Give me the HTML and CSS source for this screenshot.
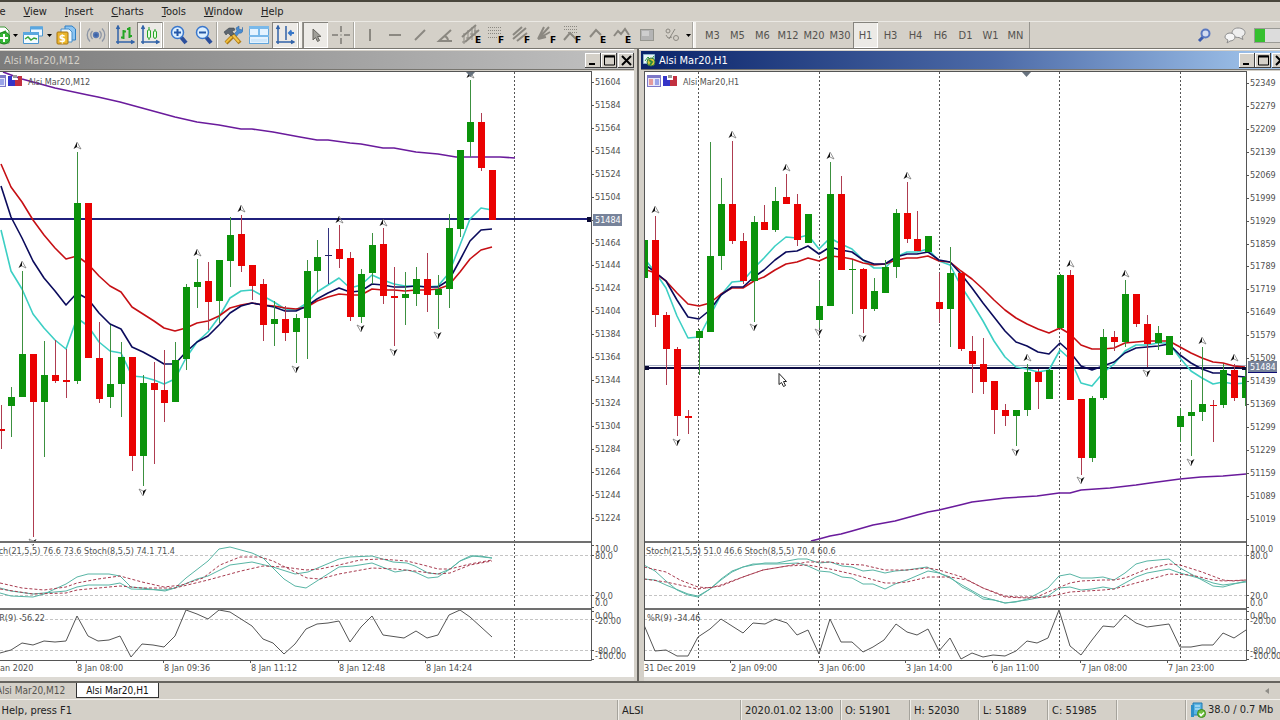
FILE: index.html
```html
<!DOCTYPE html>
<html lang="en">
	<head>
		<meta charset="UTF-8">
		<title>Alsi Mar20,H1</title>
		<meta name="viewport" content="width=device-width, initial-scale=1.0">
		<link rel="stylesheet" href="styles.css">
	</head>
	<body>
		<nav class="menu">
			<button>File</button>
			<button><u>V</u>iew</button>
			<button><u>I</u>nsert</button>
			<button><u>C</u>harts</button>
			<button><u>T</u>ools</button>
			<button><u>W</u>indow</button>
			<button><u>H</u>elp</button>
		</nav>

		<div class="toolbar">
			<button class="tool cut" aria-label="New chart">
				<svg width="10" height="20" viewBox="10 0 10 20"><path d="M0 2h15l4 4v12H0z" fill="#fff" stroke="#3f9a3a"/><path d="M0 10l6-4 5 3 5-3" fill="none" stroke="#2fae2f" stroke-width="2"/><circle cx="14" cy="13" r="6" fill="#35b435" stroke="#1c7f1c"/><path d="M14 9v8M10 13h8" stroke="#fff" stroke-width="2"/></svg>
			</button>
			<button class="drop wide" aria-label="New chart list"><svg width="5" height="3" viewBox="0 0 5 3"><path d="M0 0h5L2.500 3z"/></svg></button>
			<button class="tool big" aria-label="Profiles">
				<svg width="20" height="20" viewBox="0 0 20 20"><path d="M7.500 2h12v9h-12z" fill="#eef7ff" stroke="#4a96cf"/><path d="M7 1.500h13v3H7z" fill="#5aa7e0"/><path d="M.5 7.500h15v11H.5z" fill="#f4fbff" stroke="#4a96cf"/><path d="M0 7h16v3H0z" fill="#5aa7e0"/><path d="M2 14l3-2 3 3 3-2 3 1" fill="none" stroke="#36a53a" stroke-width="1.500"/></svg>
			</button>
			<button class="drop" aria-label="Profile list"><svg width="5" height="3" viewBox="0 0 5 3"><path d="M0 0h5L2.500 3z"/></svg></button>
			<button class="tool big" aria-label="Market watch">
				<svg width="20" height="20" viewBox="0 0 20 20"><path d="M9 1h7l3.500 3v11H9z" fill="#8cc5f2" stroke="#2f7fc4"/><path d="M5 4h8l3 3v10H5z" fill="#eef7ff" stroke="#4a90c8"/><rect x="1" y="7" width="11" height="12" rx="1" fill="#e9b530" stroke="#a87410"/><text x="6.500" y="17" class="coin">$</text></svg>
			</button>
			<i class="sep"></i>
			<button class="tool" aria-label="Signals">
				<svg width="20" height="20" viewBox="0 0 20 20" fill="none" stroke="#8c95a4" stroke-width="1.300"><circle cx="10" cy="10" r="2.500" fill="#3d64a8" stroke="#5a7ab4"/><path d="M6.500 6a5.500 5.500 0 0 0 0 8M13.500 6a5.500 5.500 0 0 1 0 8M4 3.500a9 9 0 0 0 0 13M16 3.500a9 9 0 0 1 0 13"/></svg>
			</button>
			<i class="sep"></i>
			<button class="tool" aria-label="Bar chart">
				<svg width="20" height="20" viewBox="0 0 20 20" fill="none"><path d="M3 1v18M1 17h18M1.500 4L3 1l1.500 3M16 15.500l3 1.500-3 1.500" stroke="#3263a8" stroke-width="1.500"/><path d="M8.500 5v9M6 12.500h2.500M8.500 6.500H11M14.500 2v11M12 4h2.500M14.500 11H17" stroke="#25a525" stroke-width="2"/></svg>
			</button>
			<button class="tool pressed" aria-label="Candlesticks" aria-pressed="true">
				<svg width="20" height="20" viewBox="0 0 20 20" fill="none"><path d="M3 1v18M1 17h18M1.500 4L3 1l1.500 3M16 15.500l3 1.500-3 1.500" stroke="#3263a8" stroke-width="1.500"/><path d="M9 2v3M9 13v2M15 4v2M15 13v1" stroke="#25a525"/><rect x="7.500" y="5" width="3" height="8" rx="1" fill="#e4ffe0" stroke="#25a525"/><rect x="13.500" y="6" width="3" height="7" rx="1" fill="#e4ffe0" stroke="#25a525"/></svg>
			</button>
			<i class="sep"></i>
			<button class="tool" aria-label="Zoom in">
				<svg width="20" height="20" viewBox="0 0 20 20"><path d="M12 12l5 6" stroke="#2c4f9c" stroke-width="4"/><circle cx="8.500" cy="7.500" r="6" fill="#dcefff" stroke="#3a77cc" stroke-width="1.500"/><path d="M5 7.500h7M8.500 4v7" stroke="#2558a8" stroke-width="2"/></svg>
			</button>
			<button class="tool" aria-label="Zoom out">
				<svg width="20" height="20" viewBox="0 0 20 20"><path d="M12 12l5 6" stroke="#2c4f9c" stroke-width="4"/><circle cx="8.500" cy="7.500" r="6" fill="#dcefff" stroke="#3a77cc" stroke-width="1.500"/><path d="M5 7.500h7" stroke="#2558a8" stroke-width="2"/></svg>
			</button>
			<i class="sep"></i>
			<button class="tool big" aria-label="Options">
				<svg width="20" height="20" viewBox="0 0 20 20"><path d="M3 18l8-8" stroke="#a97812" stroke-width="4"/><path d="M3 17.500l8-8" stroke="#f0bd3c" stroke-width="2"/><path d="M10 10l4-4-1-3 3-2 0 3 3 1 1-3c1 4-1 7-4 6l-3 4z" fill="#4a8cd0" stroke="#275f9e" stroke-width=".5"/><path d="M9 9l8 9" stroke="#b07d16" stroke-width="4"/><path d="M9 9l7 8" stroke="#f3c44c" stroke-width="2"/><path d="M1 7l5-4h5l1 2-3 1 2 3-3 2-3-3-2 2z" fill="#5c6670" stroke="#30383f" stroke-width=".5"/></svg>
			</button>
			<button class="tool big" aria-label="Tile windows">
				<svg width="20" height="20" viewBox="0 0 20 20"><rect x=".5" y="1.500" width="19" height="17" fill="#e4f3ff" stroke="#62a6dc"/><path d="M0 1h20v3H0zM0 10h20v2H0zM9 3h2v8H9z" fill="#79b9ea"/><path d="M2 14h16v3H2z" fill="#cfe7fa"/></svg>
			</button>
			<button class="tool big pressed" aria-label="Chart shift" aria-pressed="true">
				<svg width="20" height="20" viewBox="0 0 20 20" fill="none" stroke="#3263a8" stroke-width="1.500"><path d="M3 1v18M1 17h18M1.500 4L3 1l1.500 3M16 15.500l3 1.500-3 1.500M11 1v14"/><path d="M19 8h-5M16.500 5.500L14 8l2.500 2.500" stroke="#3777c8" stroke-width="2"/></svg>
			</button>
			<i class="grip"></i>
			<button class="tool pressed" aria-label="Cursor" aria-pressed="true">
				<svg width="20" height="20" viewBox="0 0 20 20"><path d="M7 4v11l2.500-2.500 2 4 2-1-2-4H15z" fill="#a09f99" stroke="#66655f"/></svg>
			</button>
			<button class="tool" aria-label="Crosshair">
				<svg width="20" height="20" viewBox="0 0 20 20"><path d="M10 1v6M10 13v6M1 10h6M13 10h6M9.500 10h1" stroke="#7c7a74" stroke-width="1.500"/></svg>
			</button>
			<i class="sep"></i>

			<div class="draw">
				<button class="tool" aria-label="Vertical line"><svg width="20" height="20" viewBox="0 0 20 20"><path d="M10 4v12"/></svg></button>
				<button class="tool" aria-label="Horizontal line"><svg width="20" height="20" viewBox="0 0 20 20"><path d="M4 10h12"/></svg></button>
				<button class="tool" aria-label="Trendline"><svg width="20" height="20" viewBox="0 0 20 20"><path d="M5 15L15 5"/></svg></button>
				<button class="tool" aria-label="Trend by angle"><svg width="20" height="20" viewBox="0 0 20 20"><path d="M16 5L4 16h13M9 11q4 1 4 5"/></svg></button>
				<button class="tool" aria-label="Equidistant channel"><svg width="20" height="20" viewBox="0 0 20 20"><path d="M1 12L15 0M4 17L18 5"/><path class="thin" d="M3 8v11M7 5v10M11 2v13M14 1v10M1 17h3M5 13h3M9 9h3M13 6h3"/><text x="14" y="18">E</text></svg></button>
				<button class="tool" aria-label="Fibonacci retracement"><svg width="20" height="20" viewBox="0 0 20 20"><path class="dots" d="M2 2.500h13M2 5.500h13M2 8.500h13M2 12.500h9"/><text x="12" y="18">F</text></svg></button>
				<button class="tool" aria-label="Fibonacci channel"><svg width="20" height="20" viewBox="0 0 20 20"><path d="M2 10L11 2M2 14L15 3M6 16L16 8"/><text x="13" y="18">F</text></svg></button>
				<button class="tool" aria-label="Fibonacci fan"><svg width="20" height="20" viewBox="0 0 20 20"><path d="M2 14L8 2M2 14L13 2M2 14l12-7M2 14l8-2"/><text x="14" y="18">F</text></svg></button>
				<button class="tool" aria-label="Fibonacci expansion"><svg width="20" height="20" viewBox="0 0 20 20"><path d="M3 15l6-7 6 6"/><path class="dots" d="M3 1.500h13M3 4.500h13M7 7.500h9"/><text x="14" y="18">F</text></svg></button>
				<button class="tool" aria-label="Elliott correction"><svg width="20" height="20" viewBox="0 0 20 20"><path d="M3 12l6-7 5 5"/><text x="13" y="18">E</text></svg></button>
				<button class="tool" aria-label="Elliott impulse"><svg width="20" height="20" viewBox="0 0 20 20"><path d="M2 11l4-5 3 3 4-5 4 6"/><text x="13" y="18">E</text></svg></button>
				<button class="tool" aria-label="Rectangle"><svg width="20" height="20" viewBox="0 0 20 20"><rect x="3.500" y="4.500" width="13" height="11" fill="#b4b4b4" stroke="#96968f"/><rect x="5" y="6" width="7" height="5" fill="#cecece"/></svg></button>
				<button class="tool" aria-label="Arrows"><svg width="20" height="20" viewBox="0 0 20 20"><circle cx="6" cy="6" r="2" class="thin"/><path d="M13 4L7 14M4 10l2 3 4-1" class="thin"/><circle cx="14" cy="13" r="2.500" class="thin"/></svg></button>
			</div>
			<button class="drop" aria-label="Arrow list"><svg width="5" height="3" viewBox="0 0 5 3"><path d="M0 0h5L2.500 3z"/></svg></button>
			<i class="grip broad"></i>

			<div class="periods">
				<button>M3</button><button>M5</button><button>M6</button><button class="big">M12</button><button class="big">M20</button><button class="big">M30</button><button class="pressed" aria-pressed="true">H1</button><button>H3</button><button>H4</button><button>H6</button><button>D1</button><button>W1</button><button>MN</button>
			</div>

			<div class="right">
				<button class="tool" aria-label="Search"><svg width="20" height="20" viewBox="0 0 20 20"><path d="M4 16l5-5" stroke="#3c5cae" stroke-width="3"/><circle cx="10.500" cy="8.500" r="4" fill="#d3dcf0" stroke="#5a78c0" stroke-width="2"/></svg></button>
				<button class="tool" aria-label="Chat"><svg width="22" height="20" viewBox="0 0 22 20"><path d="M14 3c4 0 7 2 7 4.500 0 2-1 3-3 4l1 3-4-2c-5 0-7-2-7-4.500S10 3 14 3z" fill="#eee" stroke="#8c8c8c"/><path d="M6 8c3 0 5 2 5 4s-2 4-5 4l-3 2 1-3c-2-1-3-1.500-3-3 0-2 2-4 5-4z" fill="#f6f6f6" stroke="#8c8c8c"/></svg></button>
				<div class="link"></div>
			</div>
		</div>

		<main class="desk">
			<section class="window">
				<header class="title">
					<h2>Alsi Mar20,M12</h2>
					<button aria-label="Minimize"><svg width="11" height="11" viewBox="0 0 11 11"><path d="M1 9h6" stroke="#000" stroke-width="2"/></svg></button>
					<button aria-label="Maximize"><svg width="11" height="11" viewBox="0 0 11 11"><path d="M.5 1h10v9H.5z" fill="none" stroke="#000"/><path d="M0 1.500h11" stroke="#000" stroke-width="2"/></svg></button>
					<button aria-label="Close"><svg width="11" height="11" viewBox="0 0 11 11"><path d="M1 1l9 9M10 1l-9 9" stroke="#000" stroke-width="2"/></svg></button>
				</header>
				<svg class="chart" id="m12" viewBox="0 71 634 606" preserveAspectRatio="xMinYMin meet"></svg>
			</section>
			<section class="window active">
				<header class="title">
					<svg width="13" height="14" viewBox="0 0 13 14"><path d="M.5 1.500h11v9H.5z" fill="#e8f4f8" stroke="#8ab4cc"/><path d="M2 8l3-4 3 3 3-4" fill="none" stroke="#2e9a3a"/><circle cx="8" cy="9" r="4" fill="#d6c63a" stroke="#2c7a44"/><path d="M6 7l3 2-2 3" stroke="#2d8c3c" fill="none" stroke-width="2"/></svg>
					<h2>Alsi Mar20,H1</h2>
					<button aria-label="Minimize"><svg width="11" height="11" viewBox="0 0 11 11"><path d="M1 9h6" stroke="#000" stroke-width="2"/></svg></button>
					<button aria-label="Maximize"><svg width="11" height="11" viewBox="0 0 11 11"><path d="M.5 1h10v9H.5z" fill="none" stroke="#000"/><path d="M0 1.500h11" stroke="#000" stroke-width="2"/></svg></button>
					<button aria-label="Close"><svg width="11" height="11" viewBox="0 0 11 11"><path d="M1 1l9 9M10 1l-9 9" stroke="#000" stroke-width="2"/></svg></button>
				</header>
				<svg class="chart" id="h1" viewBox="644 71 636 606" preserveAspectRatio="xMinYMin meet"></svg>
			</section>
		</main>

		<div class="tabs">
			<button>Alsi Mar20,M12</button>
			<button class="current">Alsi Mar20,H1</button>
			<span class="scroll"><svg width="4" height="6" viewBox="0 0 4 6"><path d="M4 0v6L0 3z" fill="#8f8d88"/></svg></span>
		</div>

		<footer class="status">
			<span class="help">For Help, press F1</span>
			<span class="symbol">ALSI</span>
			<span class="time">2020.01.02 13:00</span>
			<span>O: 51901</span>
			<span>H: 52030</span>
			<span>L: 51889</span>
			<span>C: 51985</span>
			<span></span>
			<span class="traffic"><svg width="16" height="16" viewBox="0 0 16 16"><path d="M3 1h9v12H3z" fill="#5ab4e4" stroke="#2079b0"/><path d="M1 3h3v12H1z" fill="#2d8fc8"/><path d="M5 4h5M5 7h5" stroke="#d8f0fc"/><circle cx="11.500" cy="11.500" r="4" fill="#6fbf3c" stroke="#3e8a1c"/><path d="M9.500 11.500l1.500 2 3-3" fill="none" stroke="#fff" stroke-width="1.500"/></svg>38.0 / 0.7 Mb</span>
		</footer>
		<script src="charts.js"></script>
	</body>
</html>
```

FILE: styles.css
```css
html, body {
	margin: 0;
	padding: 0;
	height: 100%;
}
body {
	display: flex;
	flex-direction: column;
	box-sizing: border-box;
	border-top: 2px solid #49463c;
	overflow: hidden;
	background: #d4d0c8;
	color: #222;
	font-family: 'DejaVu Sans Condensed', 'DejaVu Sans', sans-serif;
	font-size: 11px;
}
button {
	margin: 0;
	padding: 0;
	border: 0;
	background: none;
	color: inherit;
	font: inherit;
}
svg {
	display: block;
	flex: none;
}

/* menu */
.menu {
	display: flex;
	flex: none;
	height: 19px;
	margin-left: -20px;
}
.menu button {
	padding: 0 9px;
}

/* toolbar */
.toolbar {
	display: flex;
	flex: none;
	height: 26px;
	border-top: 1px solid #ebe9e4;
	border-bottom: 1px solid #77756f;
}
.tool, .drop {
	display: flex;
	align-items: center;
	justify-content: center;
	flex: none;
	width: 25px;
}
.tool.big {
	width: 26px;
}
.tool.cut {
	width: 10px;
}
.drop {
	width: 7px;
}
.drop.wide {
	width: 10px;
}
.pressed {
	background: #eceae6;
	box-shadow: inset 1px 1px #85837d, inset -1px -1px #fff;
}
.sep, .grip {
	flex: none;
	box-sizing: border-box;
	width: 4px;
	border-left: 1px solid #a8a69f;
	box-shadow: inset 1px 0 #fff;
}
.grip {
	width: 5px;
	border-right: 1px solid #97958f;
	background: #f4f2ee;
}
.grip.broad {
	width: 7px;
	border-right: 3px solid #d4d0c8;
}
.coin {
	font-size: 11px;
	font-weight: bold;
	text-anchor: middle;
	fill: #fff;
}
.draw {
	display: flex;
	flex: 0 0 328px;
}
.draw .tool {
	flex: 1;
}
.draw path, .draw circle {
	fill: none;
	stroke: #8b8881;
	stroke-width: 2;
}
.draw .thin, .draw .dots {
	stroke-width: 1;
}
.draw .dots {
	stroke-dasharray: 1 1;
}
.draw text {
	font: bold 9px 'DejaVu Sans', sans-serif;
	fill: #000;
}
.draw svg {
	overflow: visible;
}
.periods {
	display: flex;
	flex: none;
	padding: 0 1px;
	border-right: 1px solid #97958f;
	color: #55534f;
}
.periods button {
	width: 25px;
}
.periods .big {
	width: 26px;
}
.right {
	display: flex;
	align-items: center;
	margin-left: auto;
	gap: 5px;
}
.link {
	width: 26px;
	height: 15px;
	margin-left: 2px;
	border: 1px solid #9a9a96;
	border-right: 0;
	box-sizing: border-box;
	background: linear-gradient(to right, #35c02f 10px, #dcdcdc 10px);
}

/* chart windows */
.desk {
	display: flex;
	flex: 1;
	min-height: 0;
	background: #d4d0c8;
	border-bottom: 2px solid #66645f;
}
.window {
	display: flex;
	flex-direction: column;
	flex: 634;
	min-width: 0;
	overflow: hidden;
	padding-top: 2px;
	box-shadow: inset 0 1px #fff;
	border-right: 3px solid #d4d0c8;
}
.window.active {
	flex: 636;
	border-right: 0;
	border-left: 2px solid #66645f;
	padding-left: 5px;
}
.title {
	display: flex;
	align-items: center;
	flex: none;
	height: 18px;
	margin-bottom: 1px;
	padding-left: 4px;
	border-bottom: 1px solid #77756f;
	background: linear-gradient(to right, #7c7c7c, #c2c2c2);
	color: #d4d0c8;
}
.active .title {
	margin-left: -3px;
	margin-right: -8px;
	padding-left: 2px;
	background: linear-gradient(to right, #0a246a, #4d6ba8 55%, #a6caf0);
	color: #fff;
}
.title h2 {
	flex: 1;
	margin: 0;
	font-size: 11px;
	font-weight: normal;
}
.active .title h2 {
	margin-left: 3px;
}
.title button {
	display: flex;
	align-items: center;
	justify-content: center;
	width: 16px;
	height: 15px;
	background: #d4d0c8;
	box-shadow: inset -1px -1px #404040, inset 1px 1px #fff;
}
.title button:last-child {
	margin-left: 1px;
}
.chart {
	width: 100%;
	flex: 1;
	min-height: 0;
	background: #fff;
	border-bottom: 4px solid #dddad4;
}
.chart text {
	font-size: 9px;
	fill: #505050;
}
.chart .badge-text {
	fill: #fff;
}
.edge {
	stroke: #555;
	fill: none;
}
.pane {
	stroke: #707070;
	stroke-width: 2;
}
.level {
	stroke: #c4c4c4;
	stroke-dasharray: 3 2;
}
.day {
	stroke: #555;
	stroke-dasharray: 2 2;
}
.up {
	fill: #0b930b;
	stroke: #3c9040;
}
.down {
	fill: #ea0202;
	stroke: #ae3c50;
}
.doji {
	fill: #222266;
	stroke: #333380;
}
.body {
	stroke: none;
}
.line {
	fill: none;
	stroke-width: 1.600;
	stroke-linejoin: round;
}
.teal { stroke: #3ccfc4; }
.navy { stroke: #0b0b5c; }
.red { stroke: #c60f14; }
.purple { stroke: #6a1b9c; }
.stoch, .signal, .percent {
	stroke-width: 1;
}
.stoch { stroke: #58b5a5; }
.signal {
	stroke: #a83c50;
	stroke-dasharray: 3 2;
}
.percent { stroke: #555; }

/* bottom */
.tabs {
	display: flex;
	flex: none;
	height: 16px;
	border-bottom: 1px solid #f2f0ec;
	font-size: 10px;
}
.tabs button {
	height: 15px;
	padding: 0 9px;
	color: #55534f;
}
.tabs button:first-child {
	margin-left: -13px;
	padding-right: 11px;
}
.tabs .current {
	border: 1px solid #333;
	border-top: 0;
	background: #fff;
	color: #111;
}
.scroll {
	align-self: center;
	margin-left: auto;
	padding-right: 11px;
}
.status {
	display: flex;
	flex: none;
	height: 20px;
	line-height: 22px;
	white-space: nowrap;
}
.status span {
	flex: 0 0 69px;
	box-sizing: border-box;
	padding-left: 4px;
	border-left: 1px solid #a5a39c;
	box-shadow: inset 1px 0 #f0eee9;
}
.status .help {
	flex: 1;
	margin-left: -21px;
	border-left: 0;
}
.status .symbol {
	flex-basis: 123px;
}
.status .time {
	flex-basis: 100px;
}
.status .traffic {
	display: flex;
	align-items: center;
	flex-basis: 95px;
	gap: 2px;
}
```

FILE: charts.js
```js
(function() {
	'use strict';

	const NS = 'http://www.w3.org/2000/svg';
	const STEP = 10.93;

	// candles: colour, high, low, body top, body bottom
	const m12 = {
		id: 'm12', left: 0, first: .5, axis: 591, label: 595, caption: 28,
		name: 'Alsi Mar20,M12', shift: 470, days: [514],
		prices: { from: 51604, step: 20, y: 82, last: 51484, skip: true, badge: 219 },
		times: [[-10, '8 Jan 2020'], [77, '8 Jan 08:00'], [164, '8 Jan 09:36'], [251, '8 Jan 11:12'], [339, '8 Jan 12:48'], [426, '8 Jan 14:24']],
		stochText: [175, 'end', 'Stoch(21,5,5) 76.6 73.6 Stoch(8,5,5) 74.1 71.4'],
		percentText: [45, 'end', '%R(9) -56.22'],
		candles: `r405,449,429,431 g387,437,397,406 g271,397,354,397 r354,537,354,402 g341,457,375,402 r340,383,375,381 r349,398,380,382
			g152,384,203,381 r203,358,203,358 r322,403,358,399 g325,408,384,397 g342,417,357,384 r357,471,357,456 g375,486,383,456 r362,464,383,390
			r350,422,390,403 g342,402,360,402 g284,370,287,359 g259,308,282,287 r262,330,281,302 g260,323,260,301 g217,287,235,261 r215,272,234,266
			r265,300,265,286 r279,341,284,325 g301,346,319,324 r306,341,319,333 g314,363,318,332 g260,359,271,318 g240,292,257,271 b228,284,255,256
			r225,268,249,259 r252,321,258,317 g269,323,274,317 g233,284,245,273 r228,304,244,296 r267,346,296,298 g272,325,294,298 g267,306,279,294
			r253,312,279,295 g275,329,289,295 g214,308,228,289 g150,237,150,229 g80,157,122,142 r113,171,122,168 r170,220,170,220`,
		above: [[2, 265], [7, 146], [18, 253], [22, 209], [31, 220], [35, 223], [43, 75]],
		below: [[3, 542], [13, 492], [27, 369], [33, 328], [36, 352], [40, 335]],
		teal: [230, 271, 289, 314, 328, 340, 349, 318, 326, 342, 351, 353, 376, 377, 380, 384, 379, 358, 342, 332, 317, 298, 291, 290, 296, 302, 309, 310, 303, 292, 285, 278, 288, 285, 275, 280, 284, 286, 286, 287, 286, 273, 245, 219, 208, 210],
		red: [164, 187, 202, 220, 235, 248, 259, 256, 264, 276, 286, 292, 307, 314, 321, 328, 331, 328, 323, 321, 316, 308, 305, 303, 305, 306, 308, 309, 307, 301, 297, 294, 295, 295, 289, 290, 290, 291, 290, 290, 289, 285, 272, 259, 250, 247],
		navy: [186, 217, 238, 261, 278, 291, 305, 293, 299, 313, 324, 329, 347, 352, 358, 364, 364, 352, 342, 336, 325, 313, 306, 303, 305, 307, 311, 311, 306, 299, 293, 288, 292, 291, 284, 285, 287, 287, 286, 287, 287, 280, 260, 241, 230, 229],
		purple: '3,72 22,79 44,85 55,88 88,95 98,97 120,102 142,108 175,117 197,122 219,125 241,129 252,129 273,132 300,137 317,140 328,140 350,143 361,144 383,148 394,148 416,152 438,154 456,157 500,157 515,158',
		stoch: [
			'0,593 11,596 33,597 44,594 66,584 77,577 88,574 109,574 120,576 131,587 142,588 165,591 175,588 186,578 208,561 219,549 230,547 252,553 263,558 273,568 284,579 295,586 306,588 320,579 339,567 353,566 372,563 395,572 407,570 415,572 428,578 438,577 450,569 460,561 470,556 480,556 492,558',
			'0,588 11,591 33,594 66,591 77,587 88,585 109,585 120,583 131,589 164,590 175,588 197,579 208,576 230,565 252,562 273,567 295,574 308,572 320,567 339,559 350,557 372,556 393,562 407,563 415,566 428,573 438,574 450,569 460,561 473,556 492,558'
		],
		signal: [
			'0,583 22,588 44,590 66,587 77,583 98,579 120,576 142,582 164,587 182,585 203,578 220,565 240,557 260,557 273,561 287,568 307,578 320,579 339,574 372,568 395,569 415,571 438,574 450,573 470,565 492,561',
			'0,589 33,594 66,593 77,590 120,586 142,588 175,588 208,580 241,571 263,566 284,567 306,570 320,569 339,565 360,560 380,559 407,561 427,566 438,569 450,569 470,564 492,560'
		],
		percent: '0,653 11,650 22,643 33,645 44,641 55,642 66,641 77,616 88,636 98,641 109,640 120,636 131,657 142,644 153,645 164,647 175,636 186,610 197,614 208,619 219,610 230,612 252,626 263,639 273,643 284,654 295,644 306,629 317,624 328,623 339,621 350,642 361,627 372,616 383,635 404,638 416,631 427,638 438,635 449,615 460,610 470,617 481,627 492,637'
	};

	const h1 = {
		id: 'h1', left: 644, first: 644.2, axis: 1246, label: 1250, caption: 683,
		name: 'Alsi Mar20,H1', shift: 1026, days: [698, 819, 939, 1059, 1180],
		prices: { from: 52349, step: 70, y: 83, last: 51484, badge: 366 },
		times: [[644, '31 Dec 2019'], [731, '2 Jan 09:00'], [819, '3 Jan 06:00'], [906, '3 Jan 14:00'], [993, '6 Jan 11:00'], [1081, '7 Jan 08:00'], [1168, '7 Jan 23:00']],
		stochText: [646, 'start', 'Stoch(21,5,5) 51.0 46.6 Stoch(8,5,5) 70.4 60.6'],
		percentText: [647, 'start', '%R(9) -34.46'],
		candles: `g240,278,240,278 r216,327,240,315 r312,385,315,349 r347,436,349,416 r410,434,416,418 g329,375,331,338 g142,332,256,332 g178,270,204,256
			r141,244,204,241 r233,284,241,281 g216,322,222,281 r205,230,222,230 g187,232,201,230 r174,204,197,204 r194,246,204,240 g214,243,214,243
			g281,328,306,320 g162,306,194,306 r176,270,194,270 g260,314,269,270 r268,333,269,309 g278,311,291,309 g260,293,267,293 g209,278,213,267
			r182,243,213,239 r211,251,239,251 g236,252,236,252 r273,323,302,309 g247,347,273,309 r273,351,273,349 r336,393,351,364 r338,394,364,382
			r381,434,381,410 r404,426,410,416 g410,446,410,416 g364,416,372,410 r369,409,372,382 g369,399,370,399 g274,329,275,328 r270,400,275,400
			r399,475,399,458 g396,462,398,458 g329,400,337,398 r331,351,337,342 g280,347,294,342 r294,327,294,324 r315,367,324,344 g326,350,333,343
			g336,355,336,355 g408,442,416,427 g380,456,412,416 g347,421,404,412 r400,442,405,406 g364,408,370,405 r364,401,370,398 g370,406,377,398`,
		above: [[1, 210], [8, 135], [13, 168], [17, 156], [24, 176], [35, 358], [39, 264], [44, 274], [51, 341], [54, 358]],
		below: [[3, 442], [10, 327], [16, 332], [20, 338], [34, 452], [40, 480], [46, 373], [50, 462]],
		teal: [258, 272, 288, 316, 338, 337, 316, 295, 282, 281, 268, 258, 246, 237, 238, 235, 249, 238, 244, 249, 260, 268, 268, 257, 252, 252, 249, 261, 265, 286, 303, 321, 341, 357, 367, 369, 372, 370, 350, 359, 383, 386, 373, 364, 351, 345, 345, 343, 343, 358, 371, 378, 384, 382, 384, 383],
		red: [269, 273, 281, 293, 304, 306, 303, 294, 288, 288, 281, 277, 270, 264, 262, 258, 261, 256, 257, 259, 263, 265, 264, 260, 258, 258, 256, 261, 262, 271, 279, 289, 300, 310, 318, 324, 329, 333, 328, 334, 345, 349, 349, 348, 343, 342, 341, 341, 341, 347, 353, 358, 362, 363, 366, 367],
		navy: [264, 272, 281, 300, 317, 319, 310, 295, 287, 287, 277, 270, 260, 252, 251, 246, 254, 247, 250, 252, 260, 264, 264, 257, 254, 254, 252, 260, 262, 274, 288, 303, 317, 331, 342, 346, 352, 354, 343, 352, 366, 370, 366, 362, 353, 348, 347, 346, 344, 355, 363, 369, 373, 373, 376, 377],
		purple: '811,541 819,539 830,536 841,534 852,531 873,525 895,521 917,515 928,512 939,510 960,505 972,502 1005,498 1037,496 1059,493 1070,493 1081,490 1110,488 1136,485 1150,483 1180,479 1201,477 1223,476 1246,474',
		stoch: [
			'644,565 655,571 666,581 677,590 688,595 698,597 710,589 721,580 732,572 743,567 753,565 765,563 777,563 787,561 798,559 807,559 819,563 830,562 842,566 852,567 863,571 873,570 885,573 895,571 907,570 927,567 939,573 950,577 962,587 972,592 983,599 994,600 1005,603 1016,602 1027,599 1037,594 1048,588 1059,576 1070,574 1081,578 1092,578 1103,577 1114,580 1125,573 1136,564 1147,561 1169,559 1180,568 1191,574 1202,580 1213,586 1223,587 1234,584 1246,581',
			'644,579 655,580 666,585 688,594 698,596 710,589 721,579 732,571 743,567 753,564 777,564 798,563 808,566 819,571 830,572 842,577 852,578 863,584 873,584 885,589 895,584 907,580 928,571 939,573 950,578 962,585 983,597 1005,603 1027,600 1037,598 1048,596 1059,588 1070,587 1081,590 1092,589 1103,587 1114,589 1125,583 1136,577 1147,573 1169,569 1180,573 1191,576 1202,579 1213,583 1223,585 1246,582'
		],
		signal: [
			'644,567 666,572 680,580 698,587 710,588 721,585 743,577 763,570 787,566 807,562 830,562 842,564 863,565 885,570 907,570 928,568 939,570 962,577 983,588 1005,596 1016,597 1037,597 1048,592 1070,583 1081,581 1103,580 1114,580 1125,578 1147,569 1169,564 1180,565 1202,572 1223,580 1234,581 1246,580',
			'644,579 666,582 698,589 721,586 743,577 763,570 787,566 808,565 830,569 852,574 885,583 895,583 907,582 928,577 950,577 967,580 983,588 1005,597 1027,598 1048,597 1070,592 1103,590 1114,589 1136,583 1169,574 1191,575 1213,580 1223,581 1246,580'
		],
		percent: '644,625 655,651 666,650 677,656 688,656 698,637 710,629 721,619 732,626 743,633 753,623 765,624 775,619 787,623 797,635 808,630 819,654 830,619 841,642 852,642 863,652 873,647 884,640 896,624 907,632 917,635 928,629 939,651 950,638 961,659 972,653 983,657 993,655 1005,656 1016,651 1027,641 1037,643 1048,638 1059,610 1070,646 1081,655 1092,640 1103,626 1114,627 1125,615 1136,623 1147,627 1169,624 1180,647 1191,647 1202,645 1213,645 1223,633 1234,638 1246,630'
	};

	function draw(chart) {
		const svg = document.getElementById(chart.id);
		const x = i => Math.round(chart.first + i * STEP);

		function add(tag, attrs, text) {
			const node = document.createElementNS(NS, tag);
			for (const key in attrs) node.setAttribute(key, attrs[key]);
			if (text !== undefined) node.textContent = text;
			svg.appendChild(node);
		}
		const path = (cls, d) => add('path', { class: cls, d: d });
		const poly = (cls, points) => add('polyline', { class: cls, points: points });
		const text = (tx, y, value, anchor) => add('text', { x: tx, y: y, 'text-anchor': anchor || 'start' }, value);
		const rect = (cls, rx, y, w, h, fill) => add('rect', { class: cls, x: rx, y: y, width: w, height: h, fill: fill });

		chart.days.forEach(day => path('day', `M${day + .5} 72V660`));
		[555.5, 595.5, 619.5, 650.5].forEach(y => path('level', `M${chart.left} ${y}H${chart.axis}`));

		// last price
		const py = chart.prices.badge;
		if (chart.id === 'h1') rect('', chart.left, 365, chart.axis - chart.left, 1, '#a9b1c4');
		const lineY = chart.id === 'h1' ? 367 : py;
		rect('', chart.left, lineY - (chart.id === 'h1' ? 0 : 1), chart.axis - chart.left, 2, chart.id === 'h1' ? '#0c0c44' : '#20207c');

		['teal', 'red', 'navy'].forEach(name => {
			poly('line ' + name, chart[name].map((y, i) => x(i) + ',' + y).join(' '));
		});
		poly('line purple', chart.purple);

		chart.candles.trim().split(/\s+/).forEach((item, i) => {
			const cls = { g: 'up', r: 'down', b: 'doji' }[item[0]];
			const [high, low, top, bottom] = item.slice(1).split(',').map(Number);
			path(cls, `M${x(i) + .5} ${high}V${low}`);
			const width = Math.min(7, chart.axis - x(i) + 3);
			rect(cls + ' body', x(i) - 3, top, width, Math.max(bottom - top, 1));
		});

		// fractals
		chart.above.forEach(([i, y]) => {
			add('path', { d: `M${x(i)} ${y - 4}l-3.500 7 3.500-2z`, fill: '#111' });
			add('path', { d: `M${x(i)} ${y - 4}l4 7-4-2`, fill: 'none', stroke: '#777', 'stroke-width': .8 });
		});
		chart.below.forEach(([i, y]) => {
			add('path', { d: `M${x(i)} ${y + 4}l3.500-7-3.500 2z`, fill: '#111' });
			add('path', { d: `M${x(i)} ${y + 4}l-4-7 4 2`, fill: 'none', stroke: '#777', 'stroke-width': .8 });
		});
		add('path', { d: `M${chart.shift - 4} 72h9l-4.500 5z`, fill: '#68737f' });

		// panes under the prices
		rect('', chart.left, 543, chart.axis - chart.left, 1, '#fff');
		chart.stoch.forEach(p => poly('line stoch', p));
		chart.signal.forEach(p => poly('line signal', p));
		poly('line percent', chart.percent);
		path('edge', `M${chart.left} 71.500H${chart.axis}`);
		path('pane', `M${chart.left} 542H${chart.axis}`);
		path('pane', `M${chart.left} 609H${chart.axis}`);
		path('edge', `M${chart.left} 660.500H${chart.axis + .5}V71`);

		text(chart.stochText[0], 554, chart.stochText[2], chart.stochText[1]);
		text(chart.percentText[0], 621, chart.percentText[2], chart.percentText[1]);

		for (let i = 0; i < 20; i++) {
			const price = chart.prices.from - i * chart.prices.step;
			const y = Math.round(chart.prices.y + i * 22.93);
			path('edge', `M${chart.axis} ${y + .5}h3`);
			if (price !== chart.prices.last) text(chart.label, y + 3, price);
		}
		[[548, '100.0'], [555, '80.0'], [595, '20.0'], [602, '0.0'], [615, '0.00'], [620, '-20.00'], [650, '-80.00'], [655, '-100.00']].forEach(([y, value]) => {
			text(chart.label, y + 4, value);
		});
		[545, 555, 595, 607, 611, 619, 650, 659].forEach(y => path('edge', `M${chart.axis} ${y + .5}h3`));
		rect('', chart.label - 2, py - 5, 29, 12, '#77839a');
		add('text', { class: 'badge-text', x: chart.label, y: py + 4 }, chart.prices.last);

		if (chart.id === 'h1') {
			rect('', 1248, 372, 29, 1, '#0c0c74');
			rect('', 644, 366, 5, 4, '#0a0a34');
			rect('', 1242, 367, 4, 3, '#0a0a34');
			add('path', { d: 'M779 373.500v11l2.500-2 2 4 2-1-2-4h3z', fill: '#fff', stroke: '#222' });
			path('edge', 'M644.500 71V660');
		} else {
			rect('', 587, 217, 4, 5, '#0a0a34');
		}

		chart.times.forEach(([tx, value]) => {
			path('edge', `M${tx - .5} 660v3`);
			text(tx, 671, value);
		});

		// caption with the two one-click icons
		const c = chart.caption;
		rect('', c - 36, 75, 14, 12, '#7d78c8');
		rect('', c - 35, 78, 12, 8, '#e8e8fa');
		rect('', c - 34, 79, 4, 6, '#e59a9a');
		rect('', c - 28, 79, 4, 6, '#9aa4e8');
		add('path', { d: `M${c - 20} 76h4v4h3v6h-7z`, fill: '#3535c8' });
		add('path', { d: `M${c - 6} 76h-4v4h-3v6h7z`, fill: '#c23040' });
		rect('', c - 15, 75, 4, 3, '#999');
		text(c, 85, chart.name);
	}

	draw(m12);
	draw(h1);
})();
```
